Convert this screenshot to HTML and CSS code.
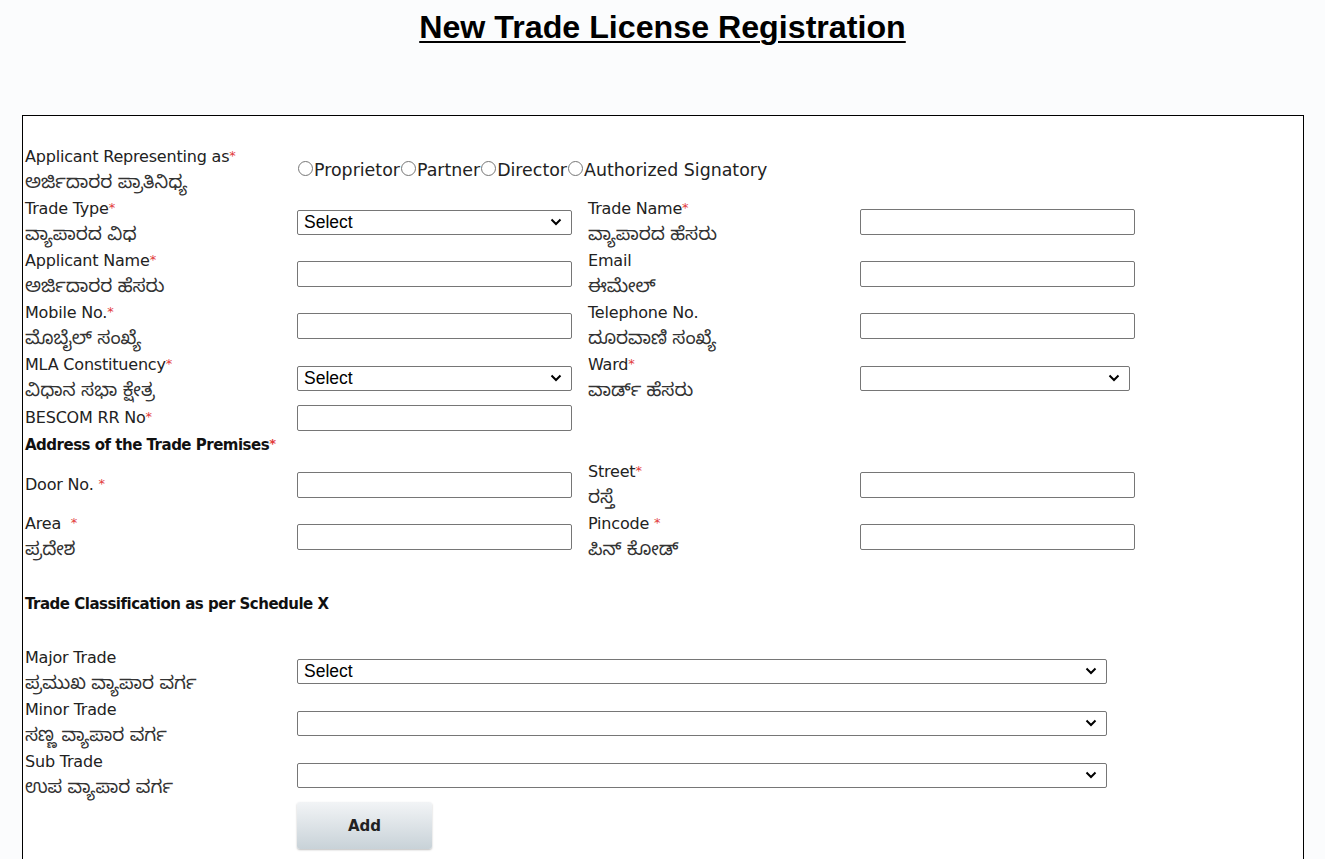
FILE: index.html
```html
<!DOCTYPE html>
<html>
<head>
<meta charset="utf-8">
<link rel="stylesheet" href="styles.css">
</head>
<body>
<h1 class="title">New Trade License Registration</h1>
<div class="panel">
  <div class="grid">
    <div class="lbl">Applicant Representing as<span class="req">*</span><span class="kn">ಅರ್ಜಿದಾರರ ಪ್ರಾತಿನಿಧ್ಯ</span></div>
    <div class="radios span3">
      <label class="radio"><input type="radio" name="rep">Proprietor</label><label class="radio"><input type="radio" name="rep">Partner</label><label class="radio"><input type="radio" name="rep">Director</label><label class="radio"><input type="radio" name="rep">Authorized Signatory</label>
    </div>

    <div class="lbl">Trade Type<span class="req">*</span><span class="kn">ವ್ಯಾಪಾರದ ವಿಧ</span></div>
    <div><select class="sel"><option>Select</option></select></div>
    <div class="lbl">Trade Name<span class="req">*</span><span class="kn">ವ್ಯಾಪಾರದ ಹೆಸರು</span></div>
    <div><input class="txt" type="text"></div>

    <div class="lbl">Applicant Name<span class="req">*</span><span class="kn">ಅರ್ಜಿದಾರರ ಹೆಸರು</span></div>
    <div><input class="txt" type="text"></div>
    <div class="lbl">Email<span class="kn">ಈಮೇಲ್</span></div>
    <div><input class="txt" type="text"></div>

    <div class="lbl">Mobile No.<span class="req">*</span><span class="kn">ಮೊಬೈಲ್ ಸಂಖ್ಯೆ</span></div>
    <div><input class="txt" type="text"></div>
    <div class="lbl">Telephone No.<span class="kn">ದೂರವಾಣಿ ಸಂಖ್ಯೆ</span></div>
    <div><input class="txt" type="text"></div>

    <div class="lbl">MLA Constituency<span class="req">*</span><span class="kn">ವಿಧಾನ ಸಭಾ ಕ್ಷೇತ್ರ</span></div>
    <div><select class="sel"><option>Select</option></select></div>
    <div class="lbl">Ward<span class="req">*</span><span class="kn">ವಾರ್ಡ್ ಹೆಸರು</span></div>
    <div><select class="sel sel-ward"><option></option></select></div>

    <div class="lbl one">BESCOM RR No<span class="req">*</span></div>
    <div class="span3"><input class="txt" type="text"></div>

    <div class="heading span4">Address of the Trade Premises<span class="req">*</span></div>

    <div class="lbl">Door No. <span class="req">*</span></div>
    <div><input class="txt" type="text"></div>
    <div class="lbl">Street<span class="req">*</span><span class="kn">ರಸ್ತೆ</span></div>
    <div><input class="txt" type="text"></div>

    <div class="lbl">Area &nbsp;<span class="req">*</span><span class="kn">ಪ್ರದೇಶ</span></div>
    <div><input class="txt" type="text"></div>
    <div class="lbl">Pincode <span class="req">*</span><span class="kn">ಪಿನ್ ಕೋಡ್</span></div>
    <div><input class="txt" type="text"></div>

    <div class="heading span4 classif">Trade Classification as per Schedule X</div>

    <div class="lbl">Major Trade<span class="kn">ಪ್ರಮುಖ ವ್ಯಾಪಾರ ವರ್ಗ</span></div>
    <div class="span3"><select class="sel sel-wide"><option>Select</option></select></div>

    <div class="lbl">Minor Trade<span class="kn">ಸಣ್ಣ ವ್ಯಾಪಾರ ವರ್ಗ</span></div>
    <div class="span3"><select class="sel sel-wide"><option></option></select></div>

    <div class="lbl">Sub Trade<span class="kn">ಉಪ ವ್ಯಾಪಾರ ವರ್ಗ</span></div>
    <div class="span3"><select class="sel sel-wide"><option></option></select></div>

    <div></div>
    <div class="span3"><button class="btn" type="button">Add</button></div>
  </div>
</div>
</body>
</html>
```

FILE: styles.css
```css
html, body {
  margin: 0;
  padding: 0;
  background: #fbfcfd;
}
body {
  font-family: "DejaVu Sans", "Noto Sans", sans-serif;
  color: #222;
  overflow: hidden;
  height: 859px;
}
.title {
  margin: 0;
  padding-top: 9px;
  height: 106px;
  box-sizing: border-box;
  text-align: center;
  font-family: "Liberation Sans", Arial, sans-serif;
  font-weight: bold;
  font-size: 32.2px;
  line-height: 36px;
  text-decoration: underline;
  text-decoration-thickness: 2px;
  text-underline-offset: 3px;
  color: #000;
}
.panel {
  margin: 9px 21px 0 22px;
  border: 1px solid #000;
  border-bottom: none;
  padding: 28px 0 40px 2px;
  background: #fff;
  height: 760px;
  box-sizing: border-box;
}
.grid {
  display: grid;
  grid-template-columns: 272px 291px 272px 1fr;
  align-items: center;
}
.lbl {
  font-size: 16px;
  line-height: 26px;
  letter-spacing: -0.2px;
  white-space: nowrap;
}
.kn {
  display: block;
  box-sizing: border-box;
  height: 26px;
  padding-top: 3px;
  font-family: "Noto Sans Kannada", "DejaVu Sans", sans-serif;
  font-size: 18.5px;
  letter-spacing: 0;
  line-height: 26px;
  color: #333;
}
.req {
  color: #e23b3b;
  font-size: 13px;
  line-height: 0;
  vertical-align: 2px;
}
.one {
  line-height: 27px;
}
.span3 {
  grid-column: span 3;
}
.span4 {
  grid-column: span 4;
}
.heading {
  font-weight: bold;
  font-size: 15px;
  line-height: 28px;
  letter-spacing: -0.5px;
  color: #111;
}
.classif {
  padding: 27px 0 27px;
}
.radios {
  font-size: 17.4px;
  line-height: 26px;
  color: #222;
}
.radio {
  display: inline-flex;
  align-items: center;
}
.radio input {
  margin: 0 1px 4px 1px;
  width: 15px;
  height: 15px;
}
.txt {
  display: block;
  box-sizing: border-box;
  width: 275px;
  height: 26px;
  margin: 0;
  border: 1px solid #767676;
  border-radius: 2px;
  background: #fff;
  padding: 1px 4px;
  font-family: "Liberation Sans", Arial, sans-serif;
  font-size: 16px;
}
.sel {
  display: block;
  box-sizing: border-box;
  width: 275px;
  height: 25px;
  margin: 0;
  padding: 0 26px 0 6px;
  border: 1px solid #767676;
  border-radius: 2px;
  -webkit-appearance: none;
  appearance: none;
  background: #fff url("data:image/svg+xml;utf8,<svg xmlns='http://www.w3.org/2000/svg' width='12' height='8' viewBox='0 0 12 8'><path d='M1.5 1.5 L6 6 L10.5 1.5' fill='none' stroke='black' stroke-width='2'/></svg>") no-repeat right 9px center;
  color: #000;
  font-family: "Liberation Sans", Arial, sans-serif;
  font-size: 17.5px;
}
.sel-ward {
  width: 270px;
}
.sel-wide {
  width: 810px;
}
.btn {
  display: block;
  margin-top: 1px;
  width: 135px;
  height: 47px;
  border: none;
  border-radius: 3px;
  background: linear-gradient(#f2f4f6, #c8d2d8);
  box-shadow: 0 1px 2px rgba(0,0,0,0.25);
  font-family: "DejaVu Sans", sans-serif;
  font-weight: bold;
  font-size: 15px;
  color: #222;
}
```
